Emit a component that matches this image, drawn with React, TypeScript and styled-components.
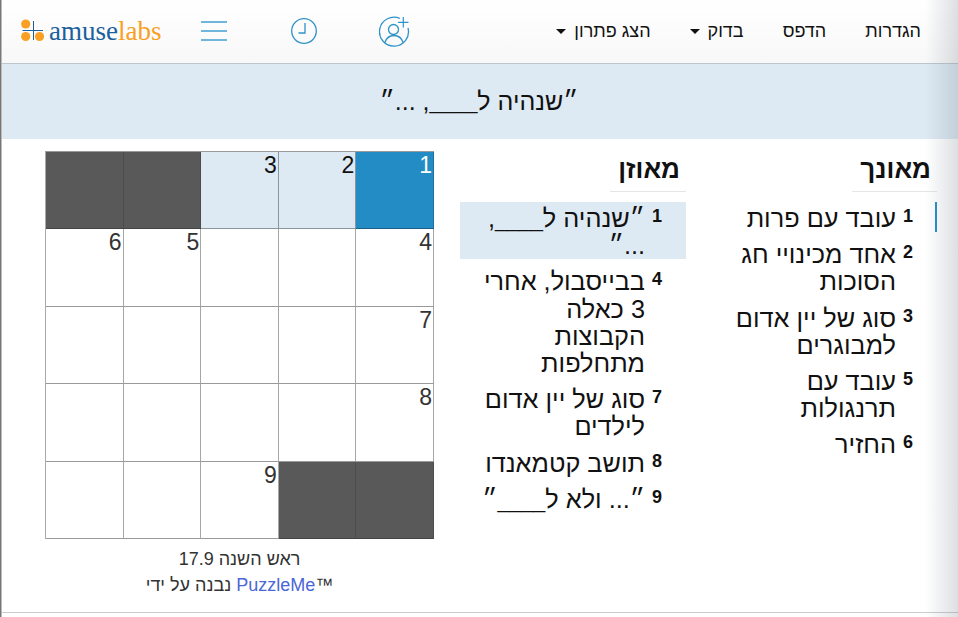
import React from "react";
import styled, { createGlobalStyle } from "styled-components";

const GlobalStyle = createGlobalStyle`
  html, body {
    margin: 0;
    padding: 0;
    background: #fff;
  }
  body {
    font-family: "Liberation Sans", Arial, sans-serif;
    color: #111;
    overflow: hidden;
  }
`;

type ClueTypes = { num: number; text: string; active?: boolean };
type CellTypes = { num?: number; kind?: "block" | "word" | "cursor" };

const acrossClues: ClueTypes[] = [
  { num: 1, text: "״שנהיה ל____, ...״", active: true },
  { num: 4, text: "בבייסבול, אחרי 3 כאלה הקבוצות מתחלפות" },
  { num: 7, text: "סוג של יין אדום לילדים" },
  { num: 8, text: "תושב קטמאנדו" },
  { num: 9, text: "״... ולא ל____״" },
];

const downClues: ClueTypes[] = [
  { num: 1, text: "עובד עם פרות" },
  { num: 2, text: "אחד מכינויי חג הסוכות" },
  { num: 3, text: "סוג של יין אדום למבוגרים" },
  { num: 5, text: "עובד עם תרנגולות" },
  { num: 6, text: "החזיר" },
];

const cells: CellTypes[] = [
  { kind: "block" }, { kind: "block" }, { num: 3, kind: "word" }, { num: 2, kind: "word" }, { num: 1, kind: "cursor" },
  { num: 6 }, { num: 5 }, {}, {}, { num: 4 },
  {}, {}, {}, {}, { num: 7 },
  {}, {}, {}, {}, { num: 8 },
  {}, {}, { num: 9 }, { kind: "block" }, { kind: "block" },
];

// the answer blank is narrower than four underscores at the text's own size
const withBlank = (text: string) => {
  const parts = text.split("____");
  if (parts.length < 2) return text;
  return (
    <>
      {parts[0]}
      <Blank>____</Blank>
      {parts[1]}
    </>
  );
};

const App = () => {
  return (
    <Page>
      <GlobalStyle />
      <Header>
        <LeftGroup>
          <Logo>
            <svg width="24" height="24" viewBox="0 0 24 24">
              <circle cx="4.7" cy="5" r="4.6" fill="#f9a024" />
              <circle cx="4.7" cy="17.5" r="4.6" fill="#f9a024" />
              <circle cx="18.5" cy="17.5" r="4.6" fill="#f9a024" />
              <path d="M1.5 11.5H22M12.5 2V21" stroke="#1b5f9c" strokeWidth="1" fill="none" />
            </svg>
            <LogoText>
              amuse<LogoAccent>labs</LogoAccent>
            </LogoText>
          </Logo>
          <Hamburger>
            <svg width="26" height="20" viewBox="0 0 26 20">
              <path d="M0 1H26M0 10H26M0 19H26" stroke="#6fb5dc" strokeWidth="1.8" fill="none" />
            </svg>
          </Hamburger>
          <ClockIcon>
            <svg width="26" height="26" viewBox="0 0 26 26">
              <circle cx="13" cy="13" r="12.3" stroke="#2f93c8" strokeWidth="1.3" fill="none" />
              <path d="M14 5V15H7.5" stroke="#2f93c8" strokeWidth="1.3" fill="none" />
            </svg>
          </ClockIcon>
          <ProfileIcon>
            <svg width="31" height="31" viewBox="0 0 31 31">
              <path d="M21 2.5A14.5 14.5 0 1 0 29 12" stroke="#2f93c8" strokeWidth="1.3" fill="none" />
              <circle cx="14.5" cy="13.5" r="5" stroke="#2f93c8" strokeWidth="1.3" fill="none" />
              <path d="M6 26.5C7.5 21.5 11 19.5 15 19.5S22.5 21.5 24 26.5" stroke="#2f93c8" strokeWidth="1.3" fill="none" />
              <path d="M24.3 1V11.5M19 6.3H29.5" stroke="#2f93c8" strokeWidth="1.2" fill="none" />
            </svg>
          </ProfileIcon>
        </LeftGroup>
        <Nav>
          <NavItem>הגדרות</NavItem>
          <NavItem>הדפס</NavItem>
          <NavItem>
            בדוק<Caret />
          </NavItem>
          <NavItem>
            הצג פתרון<Caret />
          </NavItem>
        </Nav>
      </Header>
      <ClueBanner>{withBlank("״שנהיה ל____, ...״")}</ClueBanner>
      <Main>
        <PuzzleColumn>
          <Board>
            {cells.map((cell, i) => (
              <Cell key={i} $kind={cell.kind}>
                {cell.num}
              </Cell>
            ))}
          </Board>
          <Caption>ראש השנה 17.9</Caption>
          <Credit>
            ™<CreditLink>PuzzleMe</CreditLink> נבנה על ידי
          </Credit>
        </PuzzleColumn>
        <ClueColumn>
          <ColumnTitle>מאוזן</ColumnTitle>
          <ClueList>
            {acrossClues.map((clue) => (
              <ClueRow key={clue.num} $active={clue.active}>
                <ClueNum>{clue.num}</ClueNum>
                <ClueText>{withBlank(clue.text)}</ClueText>
              </ClueRow>
            ))}
          </ClueList>
        </ClueColumn>
        <ClueColumn>
          <ColumnTitle>מאונך</ColumnTitle>
          <ClueList>
            {downClues.map((clue) => (
              <ClueRow key={clue.num} $marked={clue.num === 1}>
                <ClueNum>{clue.num}</ClueNum>
                <ClueText>{withBlank(clue.text)}</ClueText>
              </ClueRow>
            ))}
          </ClueList>
        </ClueColumn>
      </Main>
      <LeftEdge />
      <RightShade />
    </Page>
  );
};

export default App;

const Page = styled.div`
  position: relative;
  width: 958px;
  height: 617px;
  overflow: hidden;
`;
const Header = styled.header`
  height: 63px;
  padding: 0 37px 0 21px;
  display: flex;
  align-items: center;
  justify-content: space-between;
  background: linear-gradient(#ffffff, #f8f8f8);
  border-bottom: 1px solid #bcc6ce;
`;
const LeftGroup = styled.div`
  display: flex;
  align-items: center;
  padding-bottom: 1px;
`;
const Logo = styled.div`
  display: flex;
  align-items: center;
  gap: 4px;
  width: 140px;
  svg {
    display: block;
    flex: none;
  }
`;
const LogoText = styled.span`
  font-family: "Liberation Serif", serif;
  font-size: 27px;
  line-height: 30px;
  color: #1b5f9c;
`;
const LogoAccent = styled.span`
  color: #f9a024;
`;
const Hamburger = styled.div`
  margin-left: 40px;
  display: flex;
`;
const ClockIcon = styled.div`
  margin-left: 64px;
  display: flex;
`;
const ProfileIcon = styled.div`
  margin-left: 62px;
  display: flex;
`;
const Nav = styled.nav`
  direction: rtl;
  display: flex;
  align-items: center;
  gap: 39px;
  padding-bottom: 1px;
`;
const NavItem = styled.div`
  display: flex;
  align-items: center;
  gap: 8px;
  font-size: 18px;
  color: #111;
`;
const Caret = styled.span`
  flex: none;
  width: 0;
  height: 0;
  border-left: 5px solid transparent;
  border-right: 5px solid transparent;
  border-top: 5px solid #111;
`;
const ClueBanner = styled.div`
  direction: rtl;
  height: 75px;
  display: flex;
  align-items: center;
  justify-content: center;
  white-space: pre;
  background: #deeaf3;
  font-size: 25px;
  color: #111;
`;
const Blank = styled.span`
  font-size: 21.5px;
  line-height: 0;
`;
const Main = styled.main`
  height: 474px;
  display: flex;
  align-items: flex-start;
  gap: 25px;
  padding: 12px 0 0 45px;
  box-sizing: border-box;
  border-bottom: 1px solid #ccc;
`;
const PuzzleColumn = styled.div`
  width: 389px;
  margin-right: 1px;
  display: flex;
  flex-direction: column;
  align-items: center;
  direction: rtl;
`;
const Board = styled.div`
  direction: ltr;
  width: 389px;
  height: 388px;
  box-sizing: border-box;
  display: grid;
  grid-template-columns: repeat(5, 1fr);
  grid-template-rows: repeat(5, 1fr);
  border-top: 1px solid #999;
  border-left: 1px solid #aaa;
`;
const cellBackground = { block: "#595959", word: "#deeaf3", cursor: "#238cc4" };
const cellRightLine = { block: "#4c4c4c", word: "#8a959c", cursor: "#1f6f9c" };
const cellBottomLine = { block: "#444", word: "#8a959c", cursor: "#1b6088" };
const Cell = styled.div<{ $kind?: CellTypes["kind"] }>`
  box-sizing: border-box;
  border-right: 1px solid ${({ $kind }) => ($kind ? cellRightLine[$kind] : "#a6a6a6")};
  border-bottom: 1px solid ${({ $kind }) => ($kind ? cellBottomLine[$kind] : "#999")};
  background: ${({ $kind }) => ($kind ? cellBackground[$kind] : "#fff")};
  color: ${({ $kind }) => ($kind === "cursor" ? "#fff" : $kind === "word" ? "#111" : "#333")};
  font-size: 23px;
  line-height: 24px;
  text-align: right;
  padding: 1px 1px 0 0;
`;
const Caption = styled.div`
  margin-top: 10px;
  font-size: 18px;
  line-height: 20px;
  color: #333;
`;
const Credit = styled.div`
  margin-top: 6px;
  font-size: 18px;
  line-height: 20px;
  color: #333;
`;
const CreditLink = styled.span`
  color: #4a66d8;
`;
const ClueColumn = styled.section`
  direction: rtl;
  width: 226px;
`;
const ColumnTitle = styled.h2`
  display: table;
  margin: 0;
  padding: 0 6px 0 8px;
  height: 40px;
  line-height: 36px;
  font-size: 26px;
  font-weight: bold;
  color: #111;
  border-bottom: 1px solid #e6e6e6;
`;
const ClueList = styled.div`
  margin-top: 10px;
  display: flex;
  flex-direction: column;
  gap: 6px;
`;
const ClueRow = styled.div<{ $active?: boolean; $marked?: boolean }>`
  display: flex;
  align-items: flex-start;
  padding: 3px 24px 0 18px;
  background: ${({ $active }) => ($active ? "#deeaf3" : "transparent")};
  box-shadow: ${({ $marked }) => ($marked ? "inset -2px 0 0 #238cc4" : "none")};
`;
const ClueNum = styled.span`
  flex: none;
  width: 17px;
  font-size: 18px;
  font-weight: bold;
  line-height: 23px;
  color: #111;
`;
const ClueText = styled.span`
  font-size: 25.3px;
  line-height: 27.2px;
  color: #111;
`;
const LeftEdge = styled.div`
  position: absolute;
  top: 0;
  left: 0;
  bottom: 0;
  width: 1px;
  background: #777;
  box-shadow: 1px 0 0 #bbb;
`;
const RightShade = styled.div`
  position: absolute;
  top: 0;
  right: 0;
  bottom: 0;
  width: 33px;
  background: linear-gradient(to right, rgba(120, 130, 140, 0), rgba(120, 130, 140, 0.25));
  pointer-events: none;
`;
